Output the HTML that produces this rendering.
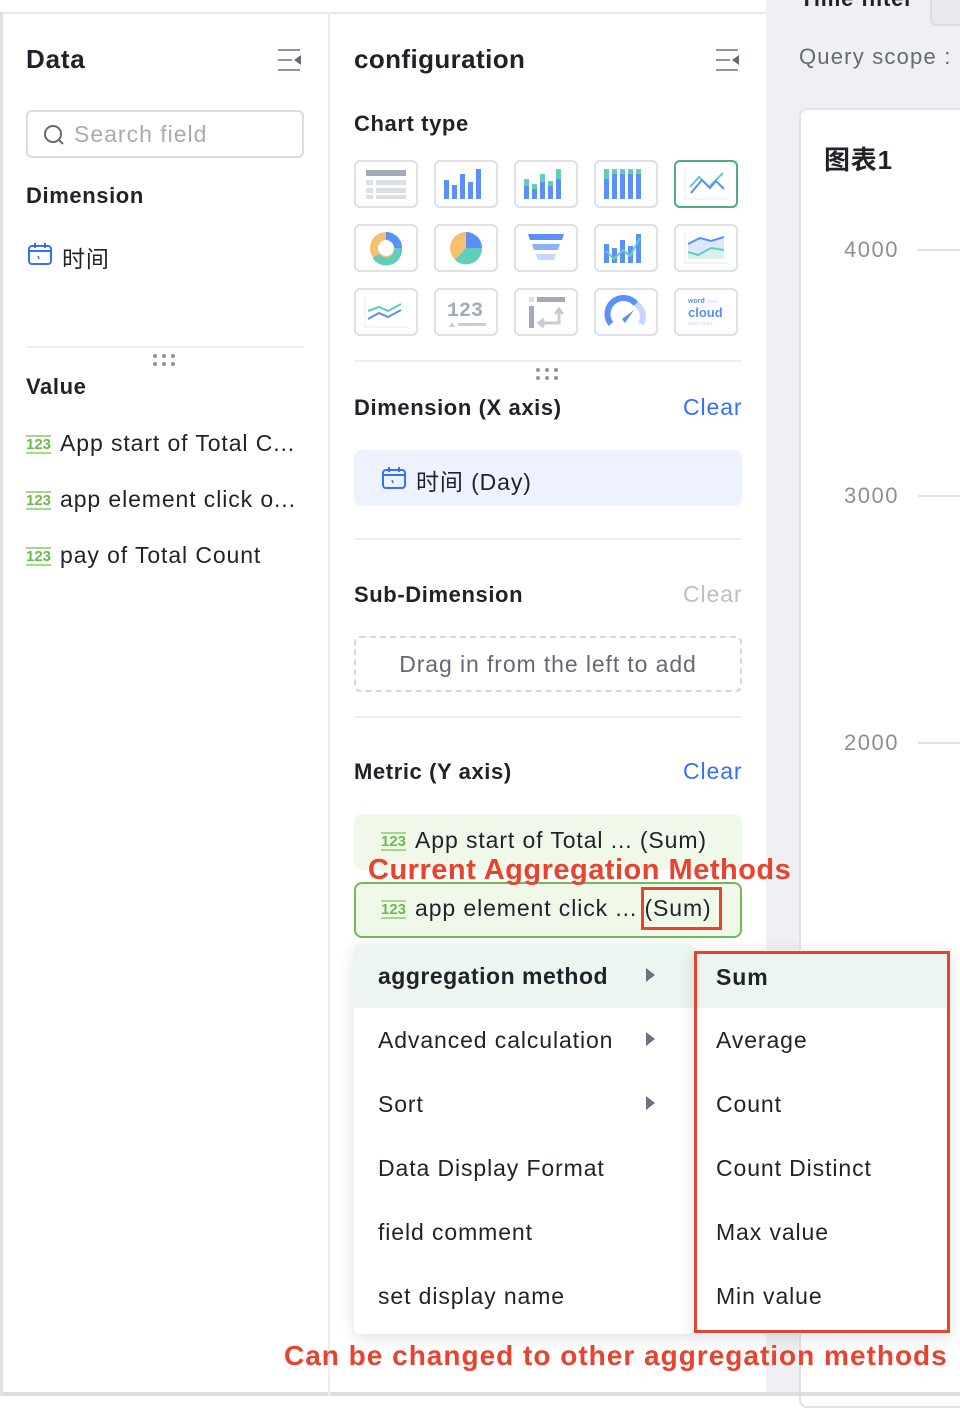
<!DOCTYPE html>
<html><head><meta charset="utf-8"><style>
*{box-sizing:border-box;margin:0;padding:0}
body{width:960px;height:1396px;position:relative;overflow:hidden;background:#fff;font-family:"Liberation Sans","Noto Sans CJK SC",sans-serif;color:#1f2329;letter-spacing:0.8px}
.a{position:absolute;white-space:nowrap}
.h{font-size:22px;font-weight:bold;color:#1f2329;letter-spacing:0.6px}
.t{font-size:23px;color:#1f2329;letter-spacing:0.9px}
.blue{color:#3370ff}
.box{position:absolute;width:64px;height:48px;border:2px solid #dee0e3;border-radius:6px;background:#fff;letter-spacing:0}
.n123{display:inline-block;font-size:15px;font-weight:bold;color:#6cbb4a;border-top:2px solid #a6d78e;border-bottom:2px solid #a6d78e;line-height:15px;padding:0;vertical-align:middle;letter-spacing:0;margin-right:9px}
.mi{position:absolute;left:0;width:340px;height:64px;font-size:23px;line-height:64px;padding-left:24px;letter-spacing:0.9px}
.si{position:absolute;left:0;width:254px;height:64px;font-size:23px;line-height:64px;padding-left:22px;letter-spacing:0.9px}
.tri{position:absolute;left:292px;top:24px;width:0;height:0;border-left:9px solid #6b7280;border-top:7px solid transparent;border-bottom:7px solid transparent}
</style></head><body>
<div class="a" style="left:766px;top:0;width:194px;height:1396px;background:#eff0f3"></div>
<div class="a" style="left:930px;top:-10px;width:40px;height:36px;border:2px solid #dcdde2;border-radius:6px;background:#e8e9ec"></div>
<div class="a" style="left:800px;top:-14px;font-size:22px;font-weight:bold;color:#1f2329">Time filter</div>
<div class="a" style="left:799px;top:44px;font-size:22px;color:#646a73;letter-spacing:1.2px">Query scope :</div>
<div class="a" style="left:799px;top:108px;width:180px;height:1300px;background:#fff;border:2px solid #e2e3e6;border-radius:8px"></div>
<div class="a" style="left:824px;top:140px;font-size:26px;font-weight:bold">图表1</div>
<div class="a" style="left:844px;top:237px;font-size:22px;color:#8f8f8f;letter-spacing:1.5px">4000</div>
<div class="a" style="left:918px;top:249px;width:42px;height:2px;background:#e0e0e0"></div>
<div class="a" style="left:844px;top:483px;font-size:22px;color:#8f8f8f;letter-spacing:1.5px">3000</div>
<div class="a" style="left:918px;top:495px;width:42px;height:2px;background:#e0e0e0"></div>
<div class="a" style="left:844px;top:730px;font-size:22px;color:#8f8f8f;letter-spacing:1.5px">2000</div>
<div class="a" style="left:918px;top:742px;width:42px;height:2px;background:#e0e0e0"></div>
<div class="a" style="left:0;top:1392px;width:960px;height:4px;background:#dcdde2"></div>

<div class="a" style="left:0;top:12px;width:766px;height:2px;background:#e6e7ea"></div>
<div class="a" style="left:0;top:12px;width:3px;height:1384px;background:#dfe1e5"></div>
<div class="a" style="left:328px;top:12px;width:2px;height:1384px;background:#eceef1"></div>

<div class="a" style="left:26px;top:44px;font-size:26px;font-weight:bold;letter-spacing:0.8px">Data</div>
<svg class="a" style="left:278px;top:48px" width="24" height="24"><path d="M0 2H22M0 12H14M0 22H22" stroke="#8f959e" stroke-width="2"/><path d="M23 7V17L16 12Z" fill="#646a73"/></svg>
<div class="a" style="left:26px;top:110px;width:278px;height:48px;border:2px solid #dcdde2;border-radius:6px"></div>
<svg class="a" style="left:43px;top:124px" width="22" height="22"><circle cx="10" cy="10" r="8" fill="none" stroke="#646a73" stroke-width="2"/><path d="M15 15L20 20" stroke="#646a73" stroke-width="2"/></svg>
<div class="a" style="left:74px;top:121px;font-size:23px;color:#a8abb2;letter-spacing:1px">Search field</div>
<div class="a h" style="left:26px;top:183px">Dimension</div>
<svg class="a" style="left:28px;top:243px" width="24" height="22"><rect x="1" y="3" width="22" height="18" rx="3" fill="none" stroke="#3370ff" stroke-width="2"/><path d="M1 8H23M7 0V5M17 0V5" stroke="#3370ff" stroke-width="2"/><path d="M10 13L11 16" stroke="#3370ff" stroke-width="1.5"/></svg>
<div class="a t" style="left:62px;top:240px">时间</div>
<div class="a" style="left:26px;top:346px;width:278px;height:2px;background:#eceef1"></div>
<svg class="a" style="left:152px;top:353px" width="26" height="14"><g fill="#8f959e"><circle cx="3" cy="3" r="2"/><circle cx="12" cy="3" r="2"/><circle cx="21" cy="3" r="2"/><circle cx="3" cy="11" r="2"/><circle cx="12" cy="11" r="2"/><circle cx="21" cy="11" r="2"/></g></svg>
<div class="a h" style="left:26px;top:374px">Value</div>
<div class="a t" style="left:26px;top:430px"><span class="n123">123</span>App start of Total C...</div>
<div class="a t" style="left:26px;top:486px"><span class="n123">123</span>app element click o...</div>
<div class="a t" style="left:26px;top:542px"><span class="n123">123</span>pay of Total Count</div>

<div class="a" style="left:354px;top:44px;font-size:26px;font-weight:bold;letter-spacing:0.4px">configuration</div>
<svg class="a" style="left:716px;top:48px" width="24" height="24"><path d="M0 2H22M0 12H14M0 22H22" stroke="#8f959e" stroke-width="2"/><path d="M23 7V17L16 12Z" fill="#646a73"/></svg>
<div class="a h" style="left:354px;top:111px">Chart type</div>

<div class="box" style="left:354px;top:160px"><svg width="60" height="44"><rect x="10" y="8" width="40" height="6" fill="#a2a9b8"/><g fill="#dbe0e7"><rect x="10" y="18" width="7" height="5"/><rect x="20" y="18" width="30" height="5"/><rect x="10" y="26" width="7" height="5"/><rect x="20" y="26" width="30" height="5"/><rect x="10" y="33" width="7" height="4"/><rect x="20" y="33" width="30" height="4"/></g></svg></div>
<div class="box" style="left:434px;top:160px"><svg width="60" height="44"><g fill="#5b8ff9"><rect x="8" y="18" width="5" height="19"/><rect x="16" y="23" width="5" height="14"/><rect x="24" y="12" width="5" height="25"/><rect x="32" y="20" width="5" height="17"/><rect x="40" y="7" width="5" height="30"/></g></svg></div>
<div class="box" style="left:514px;top:160px"><svg width="60" height="44"><g fill="#5b8ff9"><rect x="8" y="24" width="5" height="13"/><rect x="16" y="27" width="5" height="10"/><rect x="24" y="20" width="5" height="17"/><rect x="32" y="24" width="5" height="13"/><rect x="40" y="17" width="5" height="20"/></g><g fill="#61cdbb"><rect x="8" y="17" width="5" height="7"/><rect x="16" y="22" width="5" height="5"/><rect x="24" y="12" width="5" height="8"/><rect x="32" y="19" width="5" height="5"/><rect x="40" y="7" width="5" height="10"/></g></svg></div>
<div class="box" style="left:594px;top:160px"><svg width="60" height="44"><g fill="#5b8ff9"><rect x="8" y="17" width="5" height="20"/><rect x="16" y="12" width="5" height="25"/><rect x="24" y="12" width="5" height="25"/><rect x="32" y="12" width="5" height="25"/><rect x="40" y="12" width="5" height="25"/></g><g fill="#61cdbb"><rect x="8" y="7" width="5" height="10"/><rect x="16" y="7" width="5" height="5"/><rect x="24" y="7" width="5" height="5"/><rect x="32" y="7" width="5" height="5"/><rect x="40" y="7" width="5" height="5"/></g></svg></div>
<div class="box" style="left:674px;top:160px;border-color:#4caf7d"><svg width="60" height="44"><path d="M9 7V37H52" stroke="#e4e8f5" fill="none"/><path d="M14 25L23 15L33 25L47 11" stroke="#61cdbb" stroke-width="2" fill="none"/><path d="M15 31L26 18L34 26L40 19L48 27" stroke="#5b8ff9" stroke-width="2" fill="none"/></svg></div>

<div class="box" style="left:354px;top:224px"><svg width="60" height="44"><circle cx="30" cy="22" r="12" fill="none" stroke="#f6c06e" stroke-width="8"/><path d="M30 10A12 12 0 0 1 42 22" stroke="#5b8ff9" stroke-width="8" fill="none"/><path d="M42 22A12 12 0 0 1 20 30" stroke="#61cdbb" stroke-width="8" fill="none"/></svg></div>
<div class="box" style="left:434px;top:224px"><svg width="60" height="44"><circle cx="30" cy="22" r="16" fill="#f6c06e"/><path d="M30 22V6A16 16 0 0 1 46 22Z" fill="#5b8ff9"/><path d="M30 22H46A16 16 0 0 1 19 34Z" fill="#61cdbb"/></svg></div>
<div class="box" style="left:514px;top:224px"><svg width="60" height="44"><path d="M12 8H48L46 14H14Z" fill="#5b8ff9"/><path d="M16 18H44L42 24H18Z" fill="#8fb0fb"/><path d="M20 28H40L38 34H22Z" fill="#c7d6fd"/></svg></div>
<div class="box" style="left:594px;top:224px"><svg width="60" height="44"><g fill="#5b8ff9"><rect x="8" y="18" width="5" height="19"/><rect x="16" y="22" width="5" height="15"/><rect x="24" y="14" width="5" height="23"/><rect x="32" y="20" width="5" height="17"/><rect x="40" y="8" width="5" height="29"/></g><path d="M10 25L18 33L27 24L34 30L44 12" stroke="#61cdbb" stroke-width="2" fill="none"/></svg></div>
<div class="box" style="left:674px;top:224px"><svg width="60" height="44"><path d="M9 7V37H52" stroke="#e4e8f5" fill="none"/><path d="M12 18L24 12L35 15L48 11V33H12Z" fill="#dfe7fc"/><path d="M12 26L22 29L35 22L48 24V33H12Z" fill="#d7f2ec"/><path d="M12 18L24 12L35 15L48 11" stroke="#5b8ff9" stroke-width="2" fill="none"/><path d="M12 26L22 29L35 22L48 24" stroke="#61cdbb" stroke-width="2" fill="none"/></svg></div>

<div class="box" style="left:354px;top:288px"><svg width="60" height="44"><path d="M9 7V37H52" stroke="#e4e8f5" fill="none"/><path d="M12 21L23 17L32 21L45 14" stroke="#61cdbb" stroke-width="2" fill="none"/><path d="M12 29L23 23L32 27L45 20" stroke="#5b8ff9" stroke-width="2" fill="none"/></svg></div>
<div class="box" style="left:434px;top:288px"><svg width="60" height="44"><text x="11" y="26" font-family="Liberation Mono" font-weight="bold" font-size="20" fill="#a2a9b8">123</text><path d="M13 37L16 32L19 37Z" fill="#c7ccd6"/><rect x="22" y="33" width="28" height="3" fill="#c7ccd6"/></svg></div>
<div class="box" style="left:514px;top:288px"><svg width="60" height="44"><rect x="13" y="7" width="5" height="5" fill="#dbe0e7"/><rect x="21" y="7" width="28" height="5" fill="#a2a9b8"/><rect x="13" y="16" width="5" height="22" fill="#a2a9b8"/><path d="M24 33H43V20M39 24L43 19L47 24M28 29L23 33L28 37" stroke="#c7ccd6" stroke-width="3" fill="none"/></svg></div>
<div class="box" style="left:594px;top:288px"><svg width="60" height="44"><path d="M15 34A15 15 0 0 1 40 14" stroke="#5b8ff9" stroke-width="6" fill="none"/><path d="M40 14A15 15 0 0 1 45 34" stroke="#c7d6fd" stroke-width="6" fill="none"/><path d="M26 29L38 20L29 33Z" fill="#5b8ff9"/></svg></div>
<div class="box" style="left:674px;top:288px"><svg width="60" height="44"><text x="12" y="13" font-size="7" font-weight="bold" fill="#5b8ff9">word</text><text x="30" y="13" font-size="5" fill="#c7d6fd">cloud</text><text x="12" y="27" font-size="13" font-weight="bold" fill="#5b8ff9">cloud</text><text x="12" y="35" font-size="5" fill="#c7d6fd">word cloud</text></svg></div>

<div class="a" style="left:354px;top:360px;width:388px;height:2px;background:#eceef1"></div>
<svg class="a" style="left:535px;top:367px" width="26" height="14"><g fill="#8f959e"><circle cx="3" cy="3" r="2"/><circle cx="12" cy="3" r="2"/><circle cx="21" cy="3" r="2"/><circle cx="3" cy="11" r="2"/><circle cx="12" cy="11" r="2"/><circle cx="21" cy="11" r="2"/></g></svg>
<div class="a h" style="left:354px;top:395px">Dimension (X axis)</div>
<div class="a t blue" style="left:683px;top:394px">Clear</div>
<div class="a" style="left:354px;top:450px;width:388px;height:56px;background:#edf2fe;border-radius:8px"></div>
<svg class="a" style="left:382px;top:467px" width="24" height="22"><rect x="1" y="3" width="22" height="18" rx="3" fill="none" stroke="#3370ff" stroke-width="2"/><path d="M1 8H23M7 0V5M17 0V5" stroke="#3370ff" stroke-width="2"/><path d="M10 13L11 16" stroke="#3370ff" stroke-width="1.5"/></svg>
<div class="a t" style="left:416px;top:463px">时间 (Day)</div>
<div class="a" style="left:354px;top:538px;width:388px;height:2px;background:#eceef1"></div>
<div class="a h" style="left:354px;top:582px">Sub-Dimension</div>
<div class="a t" style="left:683px;top:581px;color:#bbbfc4">Clear</div>
<div class="a" style="left:354px;top:636px;width:388px;height:56px;border:2px dashed #d5d7dc;border-radius:6px;text-align:center;font-size:23px;line-height:52px;color:#646a73;letter-spacing:0.9px">Drag in from the left to add</div>
<div class="a" style="left:354px;top:716px;width:388px;height:2px;background:#eceef1"></div>
<div class="a h" style="left:354px;top:759px">Metric (Y axis)</div>
<div class="a t blue" style="left:683px;top:758px">Clear</div>
<div class="a" style="left:354px;top:814px;width:388px;height:56px;background:#f0f8ea;border-radius:8px"></div>
<div class="a t" style="left:381px;top:827px"><span class="n123">123</span>App start of Total ... (Sum)</div>
<div class="a" style="left:354px;top:882px;width:388px;height:56px;background:#f0f8ea;border:2px solid #74b957;border-radius:8px"></div>
<div class="a t" style="left:381px;top:895px"><span class="n123">123</span>app element click ... (Sum)</div>
<div class="a" style="left:641px;top:887px;width:81px;height:43px;border:3px solid #e8432e"></div>
<div class="a" style="left:368px;top:854px;font-size:29px;font-weight:bold;color:#e8432e;letter-spacing:0.5px">Current Aggregation Methods</div>

<div class="a" style="left:354px;top:944px;width:340px;height:390px;background:#fff;box-shadow:0 4px 16px rgba(0,0,0,.12);border-radius:6px;overflow:hidden">
<div class="mi" style="top:0;background:#edf5f1;font-weight:bold;letter-spacing:0.5px">aggregation method<div class="tri"></div></div>
<div class="mi" style="top:64px">Advanced calculation<div class="tri"></div></div>
<div class="mi" style="top:128px">Sort<div class="tri"></div></div>
<div class="mi" style="top:192px">Data Display Format</div>
<div class="mi" style="top:256px">field comment</div>
<div class="mi" style="top:320px">set display name</div>
</div>
<div class="a" style="left:694px;top:950px;width:256px;height:384px;background:#fff;box-shadow:0 4px 16px rgba(0,0,0,.12);overflow:hidden">
<div class="si" style="top:0;height:58px;line-height:54px;background:#edf5f1;font-weight:bold">Sum</div>
<div class="si" style="top:58px">Average</div>
<div class="si" style="top:122px">Count</div>
<div class="si" style="top:186px">Count Distinct</div>
<div class="si" style="top:250px">Max value</div>
<div class="si" style="top:314px">Min value</div>
</div>
<div class="a" style="left:694px;top:951px;width:256px;height:382px;border:3px solid #e8432e"></div>
<div class="a" style="left:284px;top:1340px;font-size:28px;font-weight:bold;color:#e8432e;letter-spacing:1px">Can be changed to other aggregation methods</div>
</body></html>
